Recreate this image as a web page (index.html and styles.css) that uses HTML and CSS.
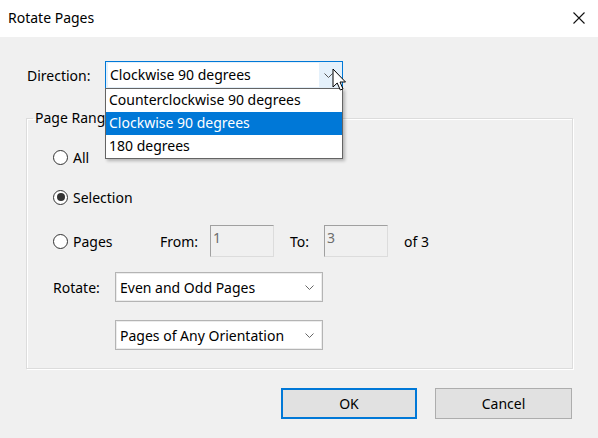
FILE: index.html
```html
<!DOCTYPE html>
<html>
<head>
<meta charset="utf-8">
<link rel="stylesheet" href="styles.css">
</head>
<body>
<div class="window">
  <div class="titlebar">
    <span class="title">Rotate Pages</span>
    <svg class="close" width="12" height="12" viewBox="0 0 12 12"><path d="M0.5 0.5 L11.5 11.5 M11.5 0.5 L0.5 11.5" stroke="#111" stroke-width="1.1" fill="none"/></svg>
  </div>
  <div class="content">
    <div class="dir-row">
      <span class="dir-label">Direction:</span>
      <div class="combo combo-open">
        <div class="combo-field">Clockwise 90 degrees</div>
        <svg class="chev" width="9" height="5" viewBox="0 0 9 5"><path d="M0.5 0.5 L4.5 4.5 L8.5 0.5" stroke="#555" stroke-width="1" fill="none"/></svg>
        <ul class="droplist">
          <li>Counterclockwise 90 degrees</li>
          <li class="sel">Clockwise 90 degrees</li>
          <li>180 degrees</li>
        </ul>
        <svg class="cursor" width="15" height="24" viewBox="0 0 15 24"><path d="M1 1 L1 19 L5.2 15 L8.3 22 L11 20.9 L8 14 L13.5 14 Z" fill="#fff" stroke="#000" stroke-width="1" stroke-linejoin="miter"/></svg>
      </div>
    </div>

    <fieldset class="group">
      <legend>Page Range</legend>
      <div class="row row-all"><span class="radio"></span><span>All</span></div>
      <div class="row row-sel"><span class="radio checked"></span><span>Selection</span></div>
      <div class="row row-pages">
        <div class="radio-item"><span class="radio"></span><span>Pages</span></div>
        <span class="lbl-from">From:</span>
        <div class="num">1</div>
        <span class="lbl-to">To:</span>
        <div class="num">3</div>
        <span class="of">of 3</span>
      </div>
      <div class="row row-rot">
        <span class="lbl-rot">Rotate:</span>
        <div class="select"><span>Even and Odd Pages</span><svg width="9" height="5" viewBox="0 0 9 5"><path d="M0.5 0.5 L4.5 4.5 L8.5 0.5" stroke="#666" stroke-width="1" fill="none"/></svg></div>
      </div>
      <div class="row row-orient">
        <div class="select"><span>Pages of Any Orientation</span><svg width="9" height="5" viewBox="0 0 9 5"><path d="M0.5 0.5 L4.5 4.5 L8.5 0.5" stroke="#666" stroke-width="1" fill="none"/></svg></div>
      </div>
    </fieldset>

    <div class="buttons">
      <div class="btn btn-default">OK</div>
      <div class="btn">Cancel</div>
    </div>
  </div>
</div>
</body>
</html>
```

FILE: styles.css
```css
* { box-sizing: border-box; }
html, body { margin: 0; padding: 0; }
body {
  width: 598px;
  height: 438px;
  overflow: hidden;
  background: #f0f0f0;
  font-family: "Noto Sans", "Open Sans", sans-serif;
  font-size: 14px;
  color: #000;
}
.window { width: 598px; height: 438px; background: #f0f0f0; }
.titlebar {
  height: 37px;
  background: #fff;
  display: flex;
  align-items: center;
  justify-content: space-between;
  padding: 0 13px 0 8px;
}
.title { font-size: 14px; line-height: 20px; margin-top: -2px; }
.close { display: block; margin-top: -2px; }

.content { padding: 24px 25px 0 26px; }

.dir-row { display: flex; align-items: center; height: 28px; }
.dir-label { width: 79px; padding-left: 1px; }
.combo {
  position: relative;
  width: 238px;
  height: 28px;
  border: 1px solid #0078d7;
  background: #e5f1fb;
  padding: 1px 0 1px 2px;
}
.combo-field {
  width: 211px;
  height: 24px;
  background: #fff;
  line-height: 23px;
  padding-left: 2px;
}
.chev { position: absolute; right: 9px; top: 11px; }
.droplist {
  position: absolute;
  left: -1px;
  top: 26px;
  width: 238px;
  margin: 0;
  padding: 0;
  list-style: none;
  background: #fff;
  border: 1px solid #646464;
  box-shadow: 2px 2px 3px rgba(0,0,0,0.25);
  z-index: 5;
}
.droplist li { height: 23px; line-height: 22px; padding-left: 3px; }
.droplist li.sel { background: #0078d7; color: #fff; }
.cursor { position: absolute; left: 226px; top: 6px; z-index: 6; }

.group {
  margin: 19px 0 0 0;
  padding: 18px 20px 18px 26px;
  border: 1px solid #dcdcdc;
  box-shadow: inset 1px 1px 0 #fff, 1px 1px 0 #fff;
  min-width: 0;
}
.group legend {
  padding: 0 2px;
  margin-left: -20px;
  line-height: 20px;
  height: 20px;
}
.row { display: flex; align-items: center; }
.row-all { height: 22px; }
.row-sel { height: 22px; margin-top: 18px; }
.row-pages { height: 32px; margin-top: 17px; }
.row-rot { height: 30px; margin-top: 15px; }
.row-orient { height: 30px; margin-top: 18px; padding-left: 62px; }

.radio {
  width: 15px;
  height: 15px;
  border: 1px solid #333;
  border-radius: 50%;
  background: #fff;
  margin-right: 5px;
  position: relative;
  flex: none;
}
.radio.checked::after {
  content: "";
  position: absolute;
  left: 2.5px; top: 2.5px;
  width: 8px; height: 8px;
  border-radius: 50%;
  background: #333;
}
.radio-item { display: flex; align-items: center; width: 107px; }
.lbl-from { width: 50px; }
.lbl-to { width: 34px; margin-left: 16px; }
.of { margin-left: 16px; }
.num {
  width: 64px;
  height: 32px;
  border: 1px solid #dcdcdc;
  border-top-color: #a0a0a0;
  border-left-color: #a0a0a0;
  background: #f0f0f0;
  color: #6d6d6d;
  padding: 2px 0 0 2px;
  line-height: 20px;
  align-self: flex-start;
}
.lbl-rot { width: 62px; }
.select {
  width: 208px;
  height: 30px;
  border: 1px solid #b4b4b4;
  box-shadow: inset 0 0 0 1px #ececec;
  background: #fff;
  display: flex;
  align-items: center;
  justify-content: space-between;
  padding: 0 8px 0 4px;
}

.buttons {
  display: flex;
  justify-content: flex-end;
  gap: 18px;
  margin-top: 19px;
  padding-right: 1px;
}
.btn {
  width: 137px;
  height: 31px;
  border: 1px solid #adadad;
  background: #e1e1e1;
  display: flex;
  align-items: center;
  justify-content: center;
}
.btn-default { border: 2px solid #0078d7; width: 136px; }
```
